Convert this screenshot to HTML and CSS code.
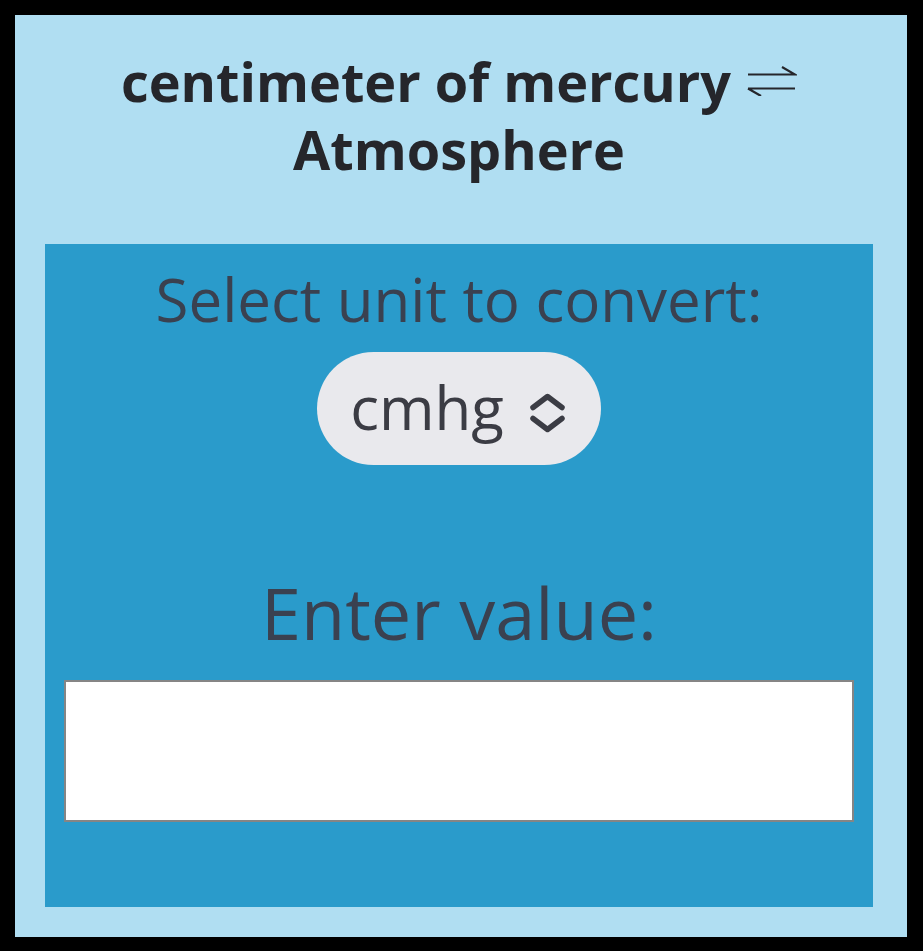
FILE: index.html
```html
<!DOCTYPE html>
<html>
<head>
<meta charset="utf-8">
<link rel="stylesheet" href="styles.css">
</head>
<body>
<div class="frame">
  <h1 class="title">centimeter of mercury <svg class="swap" width="50" height="32" viewBox="0 0 50 32"><path d="M1 10.5H48L35 3M1 24.5H48M1 24.5L14 32" fill="none" stroke="#25262b" stroke-width="2.2"/></svg><br>Atmosphere</h1>
  <div class="panel">
    <div class="label">Select unit to convert:</div>
    <div class="select">
      <span>cmhg</span>
      <svg class="chev" width="40" height="40" viewBox="0 0 40 40"><path d="M5 14.5L19.5 3.5L34 14.5M5 25.5L19.5 36.5L34 25.5" fill="none" stroke="#3b3c44" stroke-width="5.5" stroke-linecap="round" stroke-linejoin="round"/></svg>
    </div>
    <div class="label big">Enter value:</div>
    <div class="input"></div>
  </div>
</div>
</body>
</html>
```

FILE: styles.css
```css
html, body {
  margin: 0;
  padding: 0;
  background: #000;
}
body {
  padding: 15px 16px 14px 15px;
  font-family: "Open Sans", "Noto Sans", sans-serif;
}
.frame {
  background: #b0def2;
  width: 892px;
  height: 922px;
  box-sizing: border-box;
  padding: 0 34px 0 30px;
  display: flex;
  flex-direction: column;
}
.title {
  flex-shrink: 0;
  margin: 0;
  padding-top: 32px;
  height: 229px;
  box-sizing: border-box;
  text-align: center;
  font-size: 54px;
  font-weight: 700;
  line-height: 68px;
  color: #25262b;
}
.swap {
  vertical-align: 6px;
  margin-left: 2px;
}
.panel {
  flex-shrink: 0;
  background: #2a9bcb;
  height: 663px;
  box-sizing: border-box;
  padding: 15px 19px 0;
  display: flex;
  flex-direction: column;
  align-items: center;
  color: #3a4150;
}
.label {
  font-size: 60px;
  line-height: 80px;
}
.label.big {
  font-size: 72px;
  line-height: 90px;
  margin-top: 102px;
}
.select {
  margin-top: 13px;
  width: 284px;
  height: 113px;
  border-radius: 57px;
  background: #e9e9ed;
  display: flex;
  align-items: center;
  justify-content: center;
  gap: 24px;
  font-size: 60px;
  color: #3b3c44;
}
.select span {
  margin-top: -4px;
}
.chev {
  margin-top: 8px;
}
.input {
  margin-top: 23px;
  align-self: stretch;
  height: 142px;
  box-sizing: border-box;
  background: #fff;
  border: 2px solid #858585;
}
```
